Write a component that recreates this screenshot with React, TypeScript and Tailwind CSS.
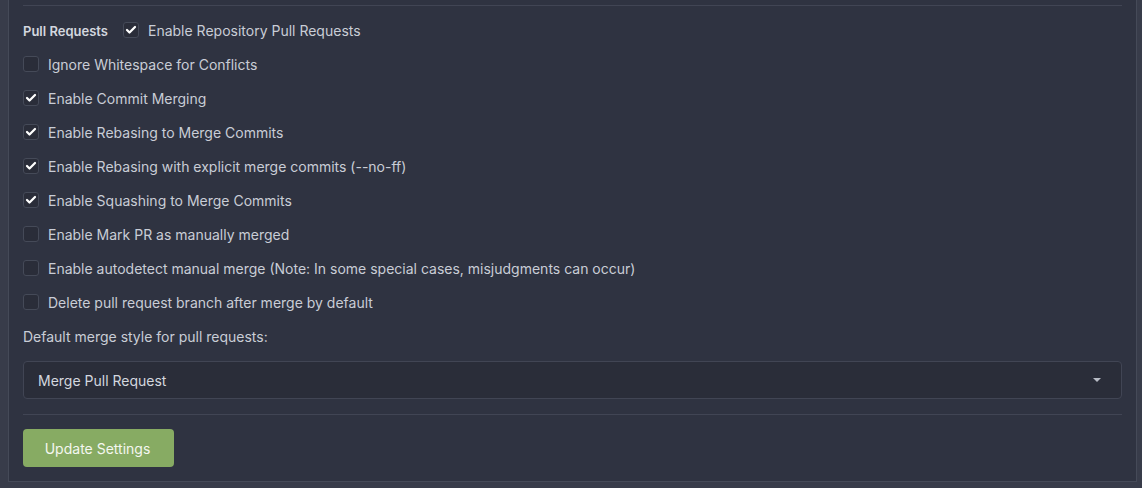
import { Check } from "lucide-react";

const options: { label: string; checked: boolean }[] = [
  { label: "Ignore Whitespace for Conflicts", checked: false },
  { label: "Enable Commit Merging", checked: true },
  { label: "Enable Rebasing to Merge Commits", checked: true },
  { label: "Enable Rebasing with explicit merge commits (--no-ff)", checked: true },
  { label: "Enable Squashing to Merge Commits", checked: true },
  { label: "Enable Mark PR as manually merged", checked: false },
  { label: "Enable autodetect manual merge (Note: In some special cases, misjudgments can occur)", checked: false },
  { label: "Delete pull request branch after merge by default", checked: false },
];

function Box({ checked }: { checked: boolean }) {
  return (
    <span className="flex h-[16px] w-[16px] shrink-0 items-center justify-center rounded-[3px] border border-[#454a58] bg-[#2a2d39]">
      {checked && <Check className="h-[12px] w-[12px] text-white" strokeWidth={4.5} />}
    </span>
  );
}

export default function App() {
  return (
    <div className="h-[488px] w-[1142px] overflow-hidden bg-[#383c4a] pl-[8px] font-['Inter',sans-serif] text-[14px] text-[#c9cdd6]">
      <div className="w-[1129px] border-x border-b border-[#454a58] bg-[#2f3341] px-[14px] pb-[14px] pt-[5px]">
        <div className="h-px bg-[#414554]" />
        <div className="mt-[7px] flex h-[34px] items-center">
          <span className="w-[100px] pt-[3px] text-[13px] font-semibold text-[#d3d7df]">Pull Requests</span>
          <label className="flex items-center gap-[9px]">
            <Box checked />
            <span>Enable Repository Pull Requests</span>
          </label>
        </div>
        {options.map((o) => (
          <label key={o.label} className="flex h-[34px] items-center gap-[9px]">
            <Box checked={o.checked} />
            <span>{o.label}</span>
          </label>
        ))}
        <div className="flex h-[34px] items-center">Default merge style for pull requests:</div>
        <div className="mt-[8px] flex h-[38px] items-center justify-between rounded-[4px] border border-[#414554] bg-[#2a2d39] pl-[14px] pr-[20px] text-[#d3d7df]">
          <span>Merge Pull Request</span>
          <span className="h-0 w-0 border-x-[4px] border-t-[4px] border-x-transparent border-t-[#b8bcc6]" />
        </div>
        <div className="mt-[15px] h-px bg-[#414554]" />
        <button className="mt-[14px] h-[38px] w-[151px] rounded-[4px] bg-[#87ab63] pr-[2px] text-[14px] text-[#f4f7f0]">
          Update Settings
        </button>
      </div>
    </div>
  );
}
